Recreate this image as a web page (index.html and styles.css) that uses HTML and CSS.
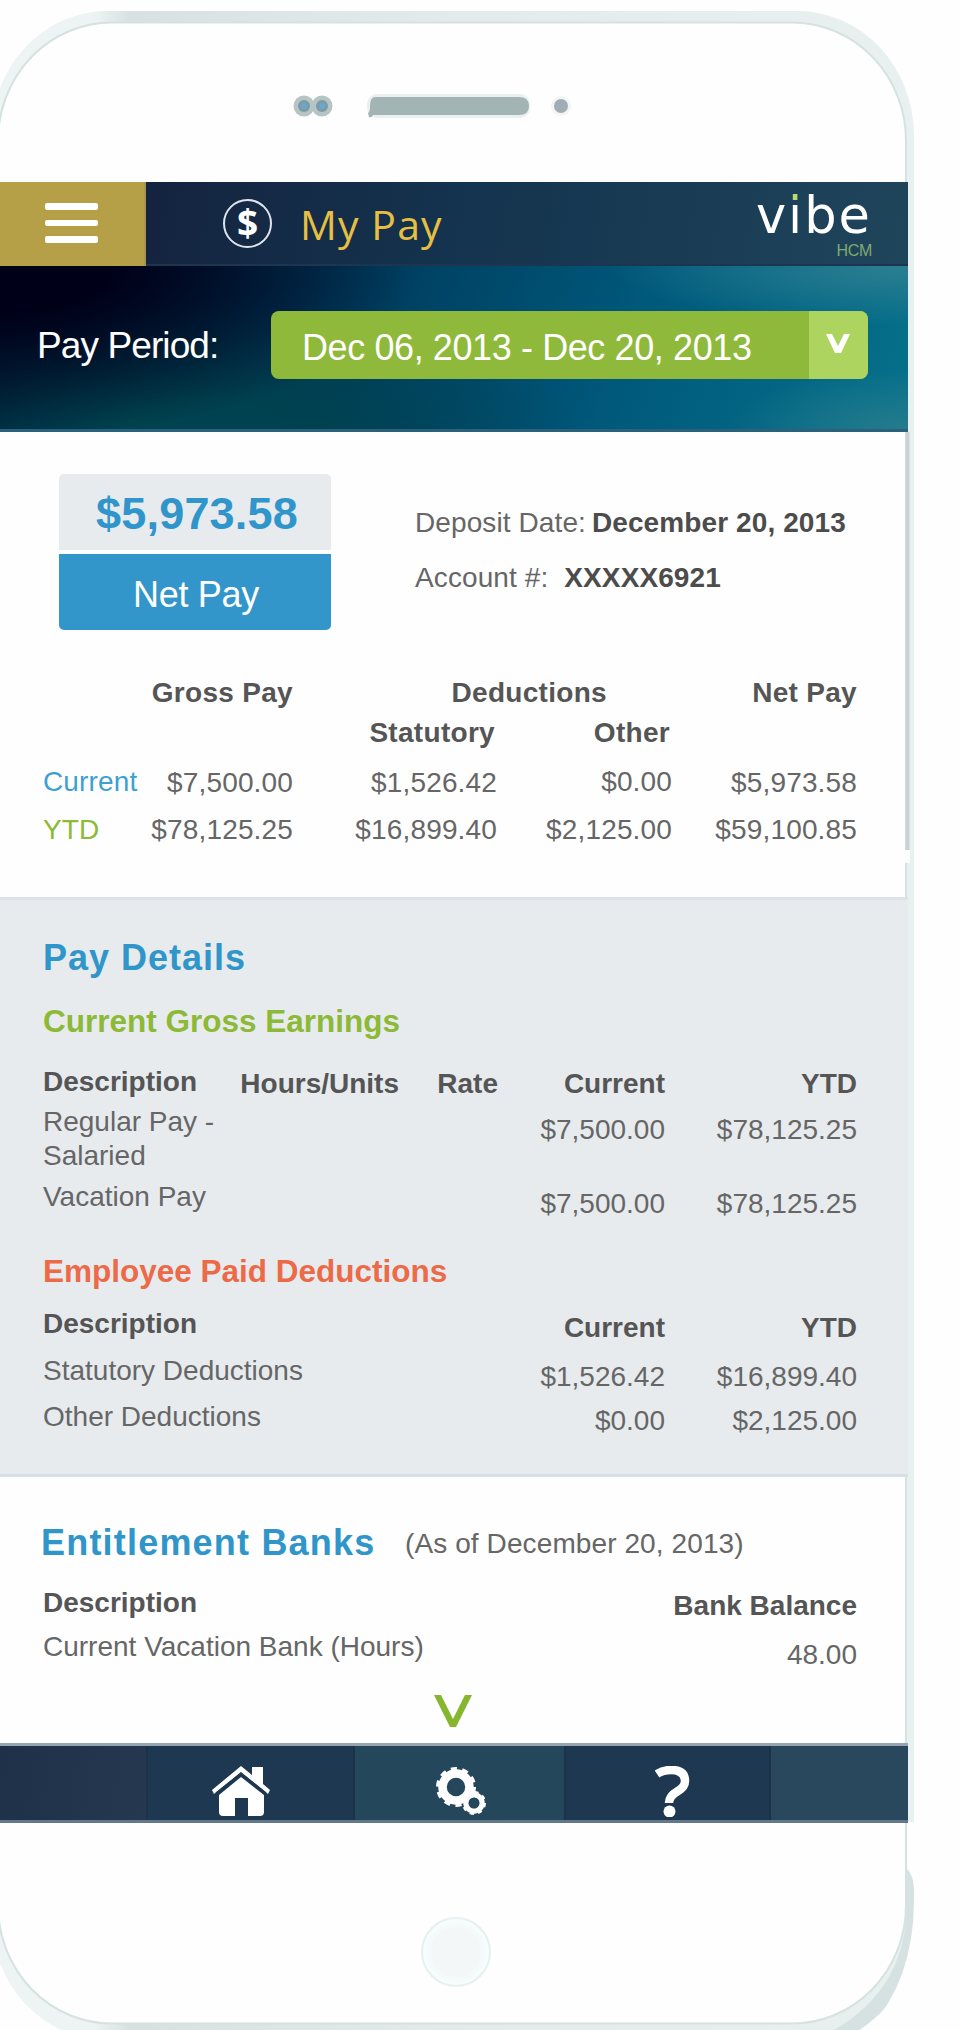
FILE: index.html
```html
<!DOCTYPE html>
<html lang="en">
<head>
    <meta charset="UTF-8">
    <meta name="viewport" content="width=device-width, initial-scale=1.0">
    <title>My Pay</title>
    <link rel="stylesheet" href="styles.css">
</head>
<body>
    <div class="phone">
        <!-- Phone casing -->
        <svg class="casing" width="960" height="2030" viewBox="0 0 960 2030">
            <defs>
                <linearGradient id="edge" x1="0" y1="0" x2="1" y2="0">
                    <stop offset="0" stop-color="#eef4f3"/>
                    <stop offset="0.11" stop-color="#eef4f3"/>
                    <stop offset="0.15" stop-color="#d7e2e0"/>
                    <stop offset="0.5" stop-color="#e2ebe9"/>
                    <stop offset="1" stop-color="#e9f1f0"/>
                </linearGradient>
            </defs>
            <rect x="-9" y="11" width="923" height="2029" rx="116" ry="125" fill="url(#edge)"/>
            <path d="M907 1822h12v90q0 90-80 130h-30q98-40 98-140z" fill="#d5e2e1"/>
            <path d="M907 1822h14v85l-7-18q-1-15-7-20z" fill="#fefefe"/>
            <path d="M914 1885h14v145h-60q46-50 46-130z" fill="#fefefe"/>
            <rect x="-2" y="22.500" width="908" height="2001" rx="114" ry="118" fill="#fefefe" stroke="#d5e2df" stroke-width="2"/>
            <path d="M907.500 432v418" stroke="#cbd1d1" stroke-width="4"/>
            <path d="M907 850v13" stroke="#fcfefe" stroke-width="6"/>
        </svg>

        <div class="speaker-area">
            <svg width="290" height="30" viewBox="0 0 290 30">
                <g fill="#b5c5c5">
                    <circle cx="15" cy="15" r="10.500"/>
                    <circle cx="33" cy="15" r="10.500"/>
                </g>
                <g fill="#7e9aa5">
                    <circle cx="15" cy="15" r="6"/>
                    <circle cx="33" cy="15" r="6"/>
                </g>
                <g fill="#6aa9cf">
                    <circle cx="15" cy="15" r="3"/>
                    <circle cx="33" cy="15" r="3"/>
                </g>
                <rect x="78" y="3" width="163" height="24" rx="10" fill="#e9f0ef"/>
                <path d="M86 6h144q10 0 10 9t-10 9H84q-1 3-4 2l-1-4q2-1 2-6 0-10 5-10z" fill="#a3b4b4"/>
                <circle cx="272" cy="15" r="10" fill="#f1f6f5"/>
                <circle cx="272" cy="15" r="7" fill="#a0adb4"/>
            </svg>
        </div>

        <div class="screen">
            <header class="header">
                <button class="menu-btn" aria-label="Menu"><span></span><span></span><span></span></button>
                <div class="coin">$</div>
                <h1>My Pay</h1>
                <div class="logo">
                    <div class="logo-name">v<span>i</span>be</div>
                    <div class="logo-sub">HCM</div>
                </div>
            </header>

            <div class="period">
                <label>Pay Period:</label>
                <div class="period-select">
                    <div class="period-value">Dec 06, 2013 - Dec 20, 2013</div>
                    <div class="period-arrow">
                        <svg width="26" height="19" viewBox="0 0 26 19"><path d="M1 0h6l6 12 6-12h6L16 19h-6z" fill="#fff"/></svg>
                    </div>
                </div>
            </div>

            <section class="summary">
                <div class="deposit">
                    <div class="net-tile">
                        <div class="net-amount">$5,973.58</div>
                        <div class="net-label">Net Pay</div>
                    </div>
                    <div class="deposit-info">
                        <p>Deposit Date:<b class="date">December 20, 2013</b></p>
                        <p>Account #:<b class="account">XXXXX6921</b></p>
                    </div>
                </div>
                <div class="totals">
                    <div class="row head"><span></span><span>Gross Pay</span><span class="span-two">Deductions</span><span>Net Pay</span></div>
                    <div class="row head sub"><span></span><span></span><span>Statutory</span><span>Other</span><span></span></div>
                    <div class="row current"><span class="blue">Current</span><span class="drop">$7,500.00</span><span class="drop">$1,526.42</span><span>$0.00</span><span class="drop">$5,973.58</span></div>
                    <div class="row ytd"><span class="green">YTD</span><span>$78,125.25</span><span>$16,899.40</span><span>$2,125.00</span><span>$59,100.85</span></div>
                </div>
            </section>

            <section class="details">
                <h2>Pay Details</h2>
                <h3 class="green">Current Gross Earnings</h3>
                <div class="row head"><span>Description</span><span>Hours/Units</span><span>Rate</span><span>Current</span><span>YTD</span></div>
                <div class="row regular"><span>Regular Pay -<br>Salaried</span><span></span><span></span><span>$7,500.00</span><span>$78,125.25</span></div>
                <div class="row vacation"><span>Vacation Pay</span><span></span><span></span><span>$7,500.00</span><span>$78,125.25</span></div>

                <h3 class="red">Employee Paid Deductions</h3>
                <div class="row short head"><span>Description</span><span>Current</span><span>YTD</span></div>
                <div class="row short statutory"><span>Statutory Deductions</span><span>$1,526.42</span><span>$16,899.40</span></div>
                <div class="row short other"><span>Other Deductions</span><span>$0.00</span><span>$2,125.00</span></div>
            </section>

            <section class="banks">
                <div class="banks-title"><h2>Entitlement Banks</h2><span>(As of December 20, 2013)</span></div>
                <div class="row head"><span>Description</span><span>Bank Balance</span></div>
                <div class="row balance"><span>Current Vacation Bank (Hours)</span><span>48.00</span></div>
                <svg class="more" width="38" height="32" viewBox="0 0 38 32"><path d="M0 0h7l12 24L31 0h7L22 32h-6z" fill="#86b62d"/></svg>
            </section>

            <nav class="tabs">
                <div class="tab edge-left"></div>
                <div class="tab">
                    <svg width="58" height="50" viewBox="0 0 58 50">
                        <g fill="#fff">
                            <path d="M29 0L0 24l2 4 27-22 27 22 2-4-7-6V1H40v8z"/>
                            <path d="M29 11L7 29v17q0 4 4 4h12V32h13v18h12q4 0 4-4V29z"/>
                        </g>
                        <path d="M4 27L29 7.500 54 27" fill="none" stroke="#1d3850" stroke-width="1.500"/>
                    </svg>
                </div>
                <div class="tab active">
                    <svg width="50" height="50" viewBox="0 0 50 50" fill="none" stroke="#fff">
                        <circle cx="20" cy="21" r="13.500" stroke-width="8.500"/>
                        <circle cx="20" cy="21" r="18" stroke-width="4" stroke-dasharray="6 5.310"/>
                        <circle cx="38" cy="37" r="8" stroke-width="5.500"/>
                        <circle cx="38" cy="37" r="5.500" fill="#25475c" stroke="none"/>
                        <circle cx="38" cy="37" r="10.500" stroke-width="3" stroke-dasharray="4.100 4.147"/>
                    </svg>
                </div>
                <div class="tab help">
                    <svg width="35" height="51" viewBox="0 0 35 51">
                        <path d="M2 8Q8 4 16 4q14 0 14 11 0 6-7 10-9 5-9 12" fill="none" stroke="#fff" stroke-width="8.500"/>
                        <circle cx="14.500" cy="45.500" r="6" fill="#fff"/>
                    </svg>
                </div>
                <div class="tab edge-right"></div>
            </nav>
        </div>

        <div class="home-area"><div class="home-btn"></div></div>
    </div>
</body>
</html>
```

FILE: styles.css
```css
* {
    box-sizing: border-box;
}
body {
    font-family: "Liberation Sans", Arial, sans-serif;
    font-size: 28px;
    line-height: 32px;
    color: #666;
    background-color: #fefefe;
    margin: 0;
    overflow: hidden;
}
h1, h2, h3, p {
    margin: 0;
}
.phone {
    position: relative;
    width: 960px;
    height: 2030px;
    overflow: hidden;
}
.casing {
    position: absolute;
    left: 0;
    top: 0;
}
.speaker-area {
    position: relative;
    height: 182px;
    padding: 91px 0 0 289px;
}
.screen {
    position: relative;
    width: 908px;
}
.blue { color: #3e9fd2; }
.green { color: #8cb936; }
.red { color: #ec6a48; }

/* Header */
.header {
    display: flex;
    height: 84px;
    background: linear-gradient(100deg, #14233f 15%, #14334e 50%, #1f455b);
    border-bottom: 2px solid #1e3550;
}
.menu-btn {
    width: 146px;
    height: 84px;
    margin-right: 77px;
    padding: 0 2px 2px 0;
    display: flex;
    flex-direction: column;
    align-items: center;
    justify-content: center;
    gap: 10px;
    border: none;
    border-right: 2px solid #a8964c;
    background-color: #b59f47;
}
.menu-btn span {
    width: 53px;
    height: 6.500px;
    border-radius: 2px;
    background-color: #fff;
}
.coin {
    width: 49px;
    height: 49px;
    margin-top: 17px;
    border: 2px solid #dfe4ea;
    border-radius: 50%;
    color: #fff;
    font: bold 37px/44px "Open Sans", sans-serif;
    text-align: center;
}
.header h1 {
    margin-left: 28px;
    font: 41px/80px "Open Sans", sans-serif;
    letter-spacing: 1.1px;
    color: #e6bf43;
    padding-top: 2px;
}
.logo {
    margin-left: auto;
    padding: 7px 36px 0 0;
    text-align: right;
}
.logo-name {
    font: 51px/54px "DejaVu Sans", sans-serif;
    letter-spacing: 2px;
    color: #fff;
}
.logo-name span {
    display: inline-block;
    color: transparent;
    background: linear-gradient(#b5dc6c 14px, #fff 14px);
    -webkit-background-clip: text;
    background-clip: text;
}
.logo-sub {
    font-size: 16px;
    line-height: 16px;
    letter-spacing: -0.3px;
    color: #80aa70;
}

/* Pay period */
.period {
    display: flex;
    height: 166px;
    padding: 45px 40px 0 37px;
    color: #fff;
    background:
        radial-gradient(ellipse 300px 60px at 100% 0, #2b7f92, transparent),
        radial-gradient(ellipse 180px 60px at 100% 100%, #247b8d, transparent),
        radial-gradient(ellipse 420px 170px at 0 0, #000018 25%, transparent),
        radial-gradient(ellipse 380px 130px at 22% 100%, #00424f 20%, transparent),
        linear-gradient(110deg, #001633, #004365 45%, #005a7c 70%, #06718b);
    border-bottom: 3px solid #2b617a;
}
.period label {
    width: 234px;
    font-size: 37px;
    line-height: 69px;
    letter-spacing: -0.9px;
}
.period-select {
    display: flex;
    width: 597px;
    height: 68px;
    border-radius: 8px;
    overflow: hidden;
    background-color: #8fb93b;
    line-height: 74px;
}
.period-value {
    width: 538px;
    padding-left: 31px;
    font-size: 36px;
    letter-spacing: -0.4px;
    white-space: nowrap;
}
.period-arrow {
    flex: 1;
    background-color: #aed460;
    padding-left: 16px;
    line-height: 66px;
}

/* Summary */
.row {
    display: grid;
}
.row span {
    text-align: right;
    white-space: nowrap;
}
.row span:first-child {
    text-align: left;
}
.head {
    font-weight: bold;
    color: #555;
}
.summary {
    height: 465px;
    padding: 42px 51px 0 43px;
}
.deposit {
    display: flex;
    height: 156px;
    padding-left: 16px;
}
.net-tile {
    width: 272px;
    text-align: center;
}
.net-amount {
    height: 76px;
    margin-bottom: 4px;
    border-radius: 5px 5px 0 0;
    background-color: #e7ebee;
    color: #2f95cb;
    font-weight: bold;
    font-size: 45px;
    line-height: 79px;
    letter-spacing: 0.2px;
    padding-left: 4px;
}
.net-label {
    height: 76px;
    border-radius: 0 0 5px 5px;
    background-color: #3296ca;
    color: #fff;
    font-size: 36px;
    line-height: 82px;
    letter-spacing: -0.3px;
    padding-left: 2px;
}
.deposit-info {
    padding: 33px 0 0 84px;
}
.deposit-info p {
    margin-bottom: 23px;
    letter-spacing: 0.1px;
    white-space: nowrap;
}
.deposit-info b {
    color: #4c4c4c;
}
.date {
    margin-left: 6px;
}
.account {
    margin-left: 16px;
}
.totals {
    padding-top: 47px;
    letter-spacing: 0.15px;
}
.totals .row {
    grid-template-columns: 100px 150px 204px 175px 185px;
}
.totals .head {
    letter-spacing: 0.3px;
}
.totals .span-two {
    grid-column: span 2;
    padding-right: 65px;
}
.totals .sub {
    margin-top: 8px;
}
.totals .sub span {
    padding-right: 2px;
}
.current {
    margin-top: 17px;
}
.ytd {
    margin-top: 15px;
}
.drop {
    padding-top: 1px;
}

/* Details */
h2 {
    font-size: 36px;
    line-height: 44px;
    letter-spacing: 1px;
    color: #3096ca;
}
h3 {
    font-size: 31.500px;
    line-height: 38px;
}
.details {
    height: 580px;
    padding: 36px 51px 0 43px;
    background-color: #e7ebee;
    border-top: 3px solid #dce3e8;
    border-bottom: 3px solid #d9dfe6;
}
.details .row {
    grid-template-columns: 197px 159px 99px 167px 192px;
}
.details h3.green {
    margin: 22px 0 26px;
}
.details .head span + span {
    padding-top: 2px;
}
.regular {
    margin-top: 5px;
    line-height: 34px;
}
.regular span + span {
    padding-top: 8px;
}
.vacation {
    margin-top: 8px;
}
.vacation span + span {
    padding-top: 7px;
}
.details h3.red {
    margin: 32px 0 18px;
}
.details .short {
    grid-template-columns: 455px 167px 192px;
}
.details .short span + span {
    padding-top: 4px;
}
.statutory {
    margin-top: 11px;
}
.details .statutory span + span {
    padding-top: 6px;
}
.other {
    margin-top: 8px;
}

/* Entitlement banks */
.banks {
    height: 266px;
    padding: 44px 51px 0 43px;
}
.banks-title {
    display: flex;
    margin-left: -2px;
}
.banks-title h2 {
    width: 364px;
    letter-spacing: 1.2px;
}
.banks-title span {
    line-height: 46px;
    letter-spacing: 0.1px;
}
.banks .row {
    grid-template-columns: 1fr auto;
}
.banks .head {
    margin-top: 20px;
}
.banks .head span + span {
    padding-top: 3px;
}
.balance {
    margin-top: 9px;
}
.balance span + span {
    padding-top: 8px;
}
.more {
    display: block;
    margin: 24px 0 0 391px;
}

/* Bottom tabs */
.tabs {
    display: grid;
    grid-template-columns: 148px 207px 211px 205px 137px;
    height: 80px;
    border-top: 3px solid #97a5b0;
    border-bottom: 3px solid #62798b;
}
.tab {
    padding: 20px 0 0 64px;
    line-height: 0;
    background-color: #1d3850;
    border-right: 2px solid #1b324b;
}
.edge-left {
    background: linear-gradient(100deg, #1f3049, #263850);
}
.active {
    padding-left: 81px;
    background-color: #25475c;
}
.help {
    padding-left: 89px;
}
.edge-right {
    background-color: #29485e;
    border-right: none;
}

.home-area {
    position: relative;
    padding: 94px 0 0 421px;
}
.home-btn {
    width: 70px;
    height: 70px;
    border: 2px solid #e9eff0;
    border-radius: 50%;
    background: radial-gradient(#f3f7f8 50%, #f6fdfd 68%);
}
```
